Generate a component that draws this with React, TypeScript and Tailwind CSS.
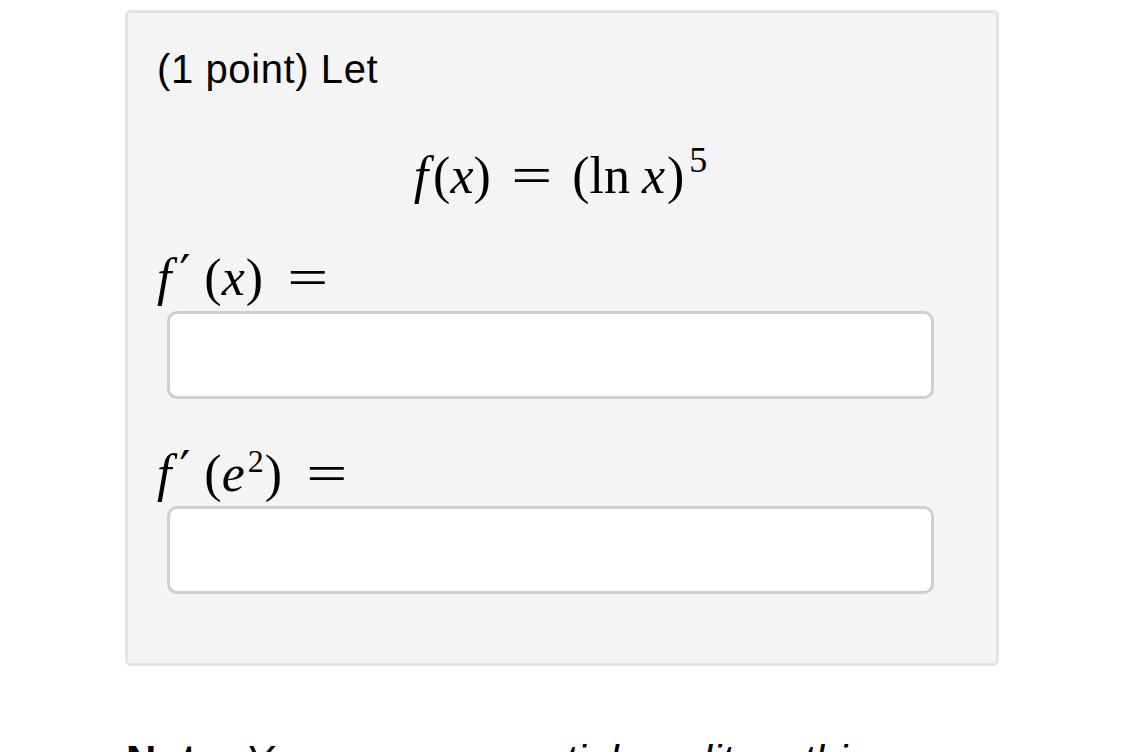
import React from 'react';

const serif = { fontFamily: '"Liberation Serif", "DejaVu Serif", serif' };
const primeFont = { fontFamily: '"DejaVu Serif", serif' };

const AnswerInput: React.FC = () => (
  <input
    type="text"
    className="block ml-[10px] w-[767px] h-[88px] bg-white border-[3px] border-[#cfcfcf] rounded-[10px] outline-none"
  />
);

const Equals: React.FC<{ className?: string }> = ({ className }) => (
  <span className={`inline-block scale-x-[1.4] ${className ?? ''}`}>=</span>
);

const Prime: React.FC = () => (
  <span className="text-[48px] relative -top-[5px] ml-[8px]" style={primeFont}>′</span>
);

export default function App() {
  return (
    <div className="h-[752px] bg-white overflow-hidden font-['Liberation_Sans',Arial,sans-serif] text-black">
      <div className="ml-[125px] mt-[10px] w-[874px] bg-[#f4f4f4] border-[3px] border-[#e3e3e3] rounded-[6px] pl-[29px] pt-[36px] pb-[69px]">
        <p className="text-[40px] leading-none tracking-[0.6px] whitespace-nowrap">(1 point) Let</p>

        <div className="mt-[61px] pr-[32px] text-center text-[52px] leading-none whitespace-nowrap" style={serif}>
          <span className="italic">f</span>
          <span className="ml-[5px]">(</span>
          <span className="italic">x</span>
          <span>)</span>
          <Equals className="mx-[26px]" />
          <span>(ln</span>
          <span className="italic ml-[12px]">x</span>
          <span className="ml-[2px]">)</span>
          <span className="text-[36px] relative -top-[21px] ml-[5px]">5</span>
        </div>

        <div className="mt-[50px] text-[52px] leading-none whitespace-nowrap" style={serif}>
          <span className="italic">f</span>
          <Prime />
          <span className="ml-[14px]">(</span>
          <span className="italic">x</span>
          <span className="ml-[1px]">)</span>
          <Equals className="ml-[30px]" />
        </div>
        <div className="mt-[7px]">
          <AnswerInput />
        </div>

        <div className="mt-[49px] text-[52px] leading-none whitespace-nowrap" style={serif}>
          <span className="italic">f</span>
          <Prime />
          <span className="ml-[14px]">(</span>
          <span className="italic">e</span>
          <span className="text-[32px] relative -top-[19px] ml-[3px]">2</span>
          <span className="ml-[1px]">)</span>
          <Equals className="ml-[30px]" />
        </div>
        <div className="mt-[6px]">
          <AnswerInput />
        </div>
      </div>

      <p className="ml-[126px] mt-[69px] w-[874px] text-[42px] leading-tight">
        <span className="font-bold">Note:</span>{' '}
        <span className="italic">You can earn partial credit on this problem.</span>
      </p>
    </div>
  );
}
